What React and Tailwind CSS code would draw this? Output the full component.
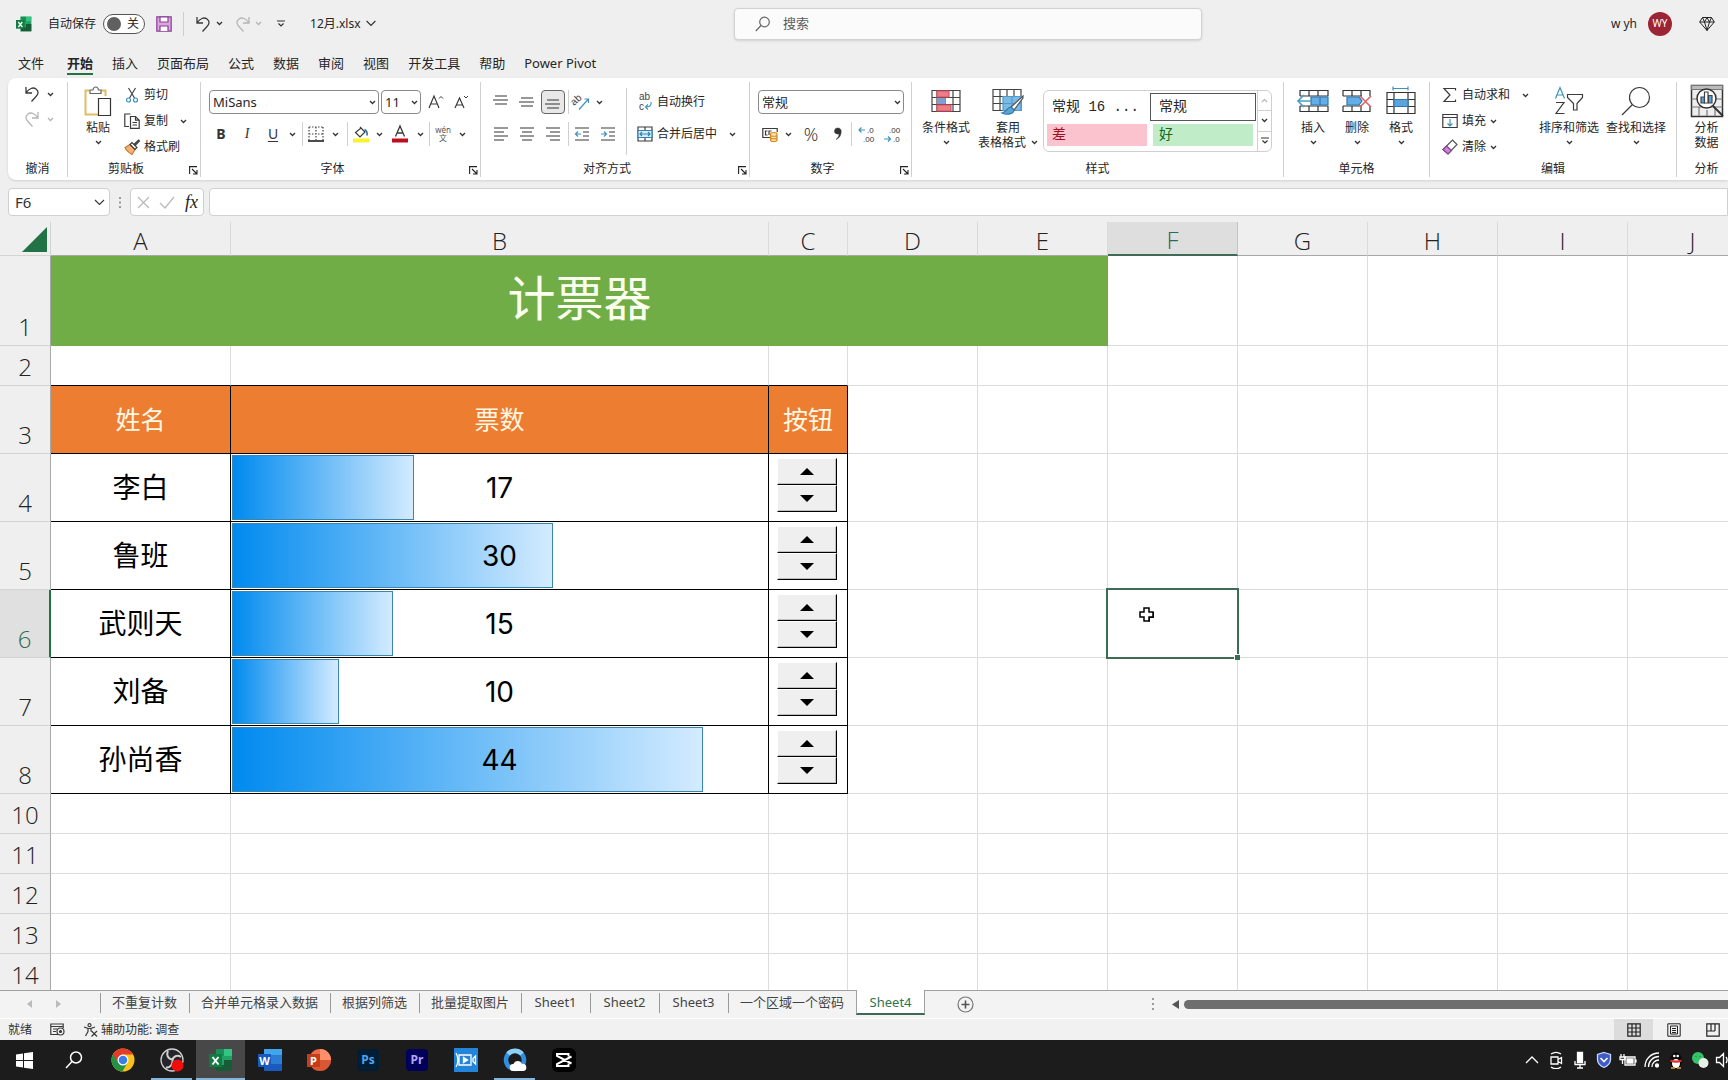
import { useState } from 'react';

const tabs = ['插入', '页面布局', '公式', '数据', '审阅', '视图', '开发工具', '帮助', 'Power Pivot'];

const sheets = ['不重复计数', '合并单元格录入数据', '根据列筛选', '批量提取图片', 'Sheet1', 'Sheet2', 'Sheet3', '一个区域一个密码'];

const columns = ['A', 'B', 'C', 'D', 'E', 'F', 'G', 'H', 'I', 'J'];

const initialVotes = [
  { row: 4, name: '李白', votes: 17 },
  { row: 5, name: '鲁班', votes: 30 },
  { row: 6, name: '武则天', votes: 15 },
  { row: 7, name: '刘备', votes: 10 },
  { row: 8, name: '孙尚香', votes: 44 },
];

const MAX_VOTES = 50;

function Svg({ w = 16, h = 16, children, className = '' }) {
  return (
    <svg
      width={w}
      height={h}
      viewBox={`0 0 ${w} ${h}`}
      fill="none"
      stroke="#3b3b3b"
      strokeWidth="1.2"
      className={`shrink-0 overflow-visible font-['Liberation_Sans',sans-serif] ${className}`}
      aria-hidden="true"
    >
      {children}
    </svg>
  );
}

function Chevron({ color = '#333', className = '' }) {
  return (
    <Svg w={7} h={5} className={className}>
      <path d="M1 1l2.500 2.500L6 1" stroke={color} strokeWidth="1.300" />
    </Svg>
  );
}

function Cell({ label, className = '', children }) {
  return (
    <button aria-label={label} className={`flex h-6 shrink-0 items-center justify-center ${className}`}>
      {children}
    </button>
  );
}

function Divider({ className = '' }) {
  return (
    <span className={`flex h-6 shrink-0 justify-center ${className}`}>
      <span className="h-full w-px bg-[#d0d0d0]" />
    </span>
  );
}

function Launcher() {
  return (
    <button aria-label="更多设置" className="absolute top-[5px] right-[2px] flex">
      <Svg w={9} h={9}>
        <path d="M.6 8V.6H8M3 3l5 5M8 4v4H4" stroke="#222" strokeWidth="1.100" />
      </Svg>
    </button>
  );
}

function Group({ title, launcher, className = '', children }) {
  return (
    <section className={`flex shrink-0 flex-col border-r border-[#d0d0d0] ${className}`}>
      <div className="flex flex-1">{children}</div>
      <div className={`relative text-center text-xs leading-4 ${launcher ? 'pr-4' : ''}`}>
        {title}
        {launcher && <Launcher />}
      </div>
    </section>
  );
}

function Dropdown({ label, value, className = '' }) {
  return (
    <label className={`relative flex h-6 shrink-0 items-center ${className}`}>
      <select
        aria-label={label}
        defaultValue={value}
        className="h-6 w-full appearance-none rounded border border-[#8a8a8a] bg-white px-[3px] text-[13px] leading-5"
      >
        <option>{value}</option>
      </select>
      <Chevron className="pointer-events-none absolute right-[3px]" />
    </label>
  );
}

function BigButton({ icon, lines, inline, className = '' }) {
  return (
    <button className={`flex shrink-0 flex-col items-center text-xs leading-[15px] ${className}`}>
      <span className="flex h-[38px] items-center justify-center">{icon}</span>
      {lines.map((line, i) => (
        <span key={line} className="flex items-center whitespace-nowrap">
          {line}
          {inline && i === lines.length - 1 && <Chevron className="ml-[5px]" />}
        </span>
      ))}
      {!inline && <Chevron className="mt-[5px]" />}
    </button>
  );
}

function SmallButton({ icon, text, arrow, arrowClass = '' }) {
  return (
    <button className="flex h-[26px] items-center text-xs">
      <span className="mr-1 flex w-4 justify-center">{icon}</span>
      {text}
      {arrow && <Chevron className={arrowClass} />}
    </button>
  );
}

/* ---------- ribbon drawings ---------- */

function UndoIcon({ color = '#3b3b3b' }) {
  return (
    <Svg>
      <path d="M2 1v6h6M2 7C5 2.500 9 .8 12 3s2.600 5-.4 8L7.500 15.500" stroke={color} strokeWidth="1.300" />
    </Svg>
  );
}

function RedoIcon({ color = '#b5b5b5' }) {
  return (
    <Svg>
      <path d="M14 1v6H8M14 7C11 2.500 7 .8 4 3S1.400 8 4.400 11L8.500 15.500" stroke={color} strokeWidth="1.300" />
    </Svg>
  );
}

function LinesIcon({ rows }) {
  return (
    <Svg>
      {rows.map(([x1, x2, y]) => (
        <path key={y} d={`M${x1} ${y}H${x2}`} stroke="#333" />
      ))}
    </Svg>
  );
}

function PasteIcon() {
  return (
    <Svg w={28} h={32}>
      <path d="M5.500 5.500H1.500v24h12V29" stroke="#e3bb66" strokeWidth="2" />
      <path d="M17 5.500h4.500V11" stroke="#e3bb66" strokeWidth="2" />
      <path d="M6 8.500V5h3c.5-4 5-4 5.500 0H17v3.500z" fill="#fff" stroke="#666" />
      <path d="M14.500 13.500h12v17h-12z" fill="#fff" stroke="#333" />
    </Svg>
  );
}

function ScissorsIcon() {
  return (
    <Svg>
      <path d="M4.500 1l6 10M11.500 1l-6 10" stroke="#444" />
      <circle cx="4.500" cy="13" r="2" stroke="#3b8fc2" />
      <circle cx="11.500" cy="13" r="2" stroke="#3b8fc2" />
    </Svg>
  );
}

function CopyIcon() {
  return (
    <Svg>
      <path d="M5 13.500H.8V1h5.700" />
      <path d="M6.500 3.500h5l3.700 3.700v8.200H6.500zM11.500 3.500v3.700h3.700M8.500 9.500h4.500M8.500 12h4.500" />
    </Svg>
  );
}

function BrushIcon() {
  return (
    <Svg>
      <path d="M1 8.500l5-3 5 5-3 5C5.500 14 2.500 12 1 8.500z" fill="#f2b27a" stroke="#cf7a2c" />
      <path d="M6 5.500l2-2 5 5-2 2z" fill="#fff" />
      <path d="M10 5.500L14.500 1l1 1L11 6.500" />
    </Svg>
  );
}

function BordersIcon() {
  return (
    <Svg>
      <path d="M1 1h14M1 8h14M1 1v13M8 1v13M15 1v13" stroke="#444" strokeDasharray="1.500 1.500" />
      <path d="M0 15h16" stroke="#111" strokeWidth="1.600" />
    </Svg>
  );
}

function FillIcon() {
  return (
    <Svg w={18} h={18}>
      <path d="M8 2l5 5-5 5-4.500-4.500L9 3" />
      <path d="M12.500 4.500c2 1 3 3 2.500 6" stroke="#2d6ca2" strokeWidth="1.600" />
      <path d="M1 15.500h16" stroke="#f7f32c" strokeWidth="4" />
    </Svg>
  );
}

function FontColorIcon() {
  return (
    <Svg w={18} h={18}>
      <path d="M4.500 11.500L9 1l4.500 10.500M6 8h6" strokeWidth="1.300" />
      <path d="M1 15.500h16" stroke="#c00d1e" strokeWidth="4" />
    </Svg>
  );
}

function CondFormatIcon() {
  return (
    <Svg w={30} h={24}>
      <path d="M1 1.500h28v21H1zM1 8.500h28M1 15.500h28M6 1.500v21M14 1.500v21M22 1.500v21" fill="#fff" stroke="#444" />
      <path d="M6 2h12v6H6zM6 16h14v6H6z" fill="#ef7d89" stroke="#e04f5f" />
      <path d="M6 9h8v6H6z" fill="#7f9fd0" stroke="none" />
    </Svg>
  );
}

function TableFormatIcon() {
  return (
    <Svg w={32} h={28}>
      <path d="M1 2.500h28v21H1zM1 9.500h28M1 16.500h28M8 2.500v21M15 2.500v21M22 2.500v21" fill="#fff" stroke="#444" />
      <path d="M11 9.500h18v14H11z" fill="#7db9e0" stroke="#4d9bd0" />
      <path d="M20 9.500v14M11 16.500h18" stroke="#4d9bd0" />
      <path d="M31 9L19 20l3 3 9-12z" fill="#fff" stroke="#555" />
      <path d="M19 20c-4 0-4 5-9 6 5 2.500 12 1 12-3z" fill="#5aa5d8" stroke="#2f78ad" />
    </Svg>
  );
}

function InsertCellsIcon() {
  return (
    <Svg w={32} h={24}>
      <path d="M3 7V1.500h28V7M12 1.500V7M21 1.500V7M3 7h28M3 17h28M3 17v5.500h28V17M12 17v5.500M21 17v5.500" stroke="#333" />
      <path d="M14 8h17v8H14z" fill="#63aee6" stroke="#2f78ad" />
      <path d="M23 8v8" stroke="#2f78ad" />
      <path d="M14 12H1M7 6l-6 6 6 6" stroke="#4b9ec4" strokeWidth="1.600" />
    </Svg>
  );
}

function DeleteCellsIcon() {
  return (
    <Svg w={30} h={24}>
      <path d="M1 7V1.500h27V7M10 1.500V7M19 1.500V7M1 7h19M1 17h19M1 17v5.500h27V17M10 17v5.500M19 17v5.500" stroke="#333" />
      <path d="M5 8h12l3 4-3 4H5z" fill="#63aee6" stroke="#2f78ad" />
      <path d="M18 7l11 11M29 7L18 18" stroke="#d8656a" strokeWidth="1.600" />
    </Svg>
  );
}

function FormatCellsIcon() {
  return (
    <Svg w={30} h={30}>
      <path d="M7 2.500h15M7 .5v4M22 .5v4" stroke="#3f92b8" />
      <path d="M1 6.500h28v21H1zM1 13.500h28M1 20.500h28M8 6.500v21M22 6.500v21" stroke="#333" />
      <path d="M8 13.500h14v7H8z" fill="#5aa5dd" stroke="#2f78ad" />
    </Svg>
  );
}

function SortIcon() {
  return (
    <Svg w={30} h={30}>
      <path d="M1.500 12.500L6 1.500l4.500 11M3 9h6" stroke="#3f92b8" />
      <path d="M2 16.500h8l-8 11h8.500" />
      <path d="M13.500 8.500h15v3l-5.500 6v6.500h-3.500v-6.500l-6-6z" />
    </Svg>
  );
}

function FindIcon() {
  return (
    <Svg w={30} h={30}>
      <circle cx="18.500" cy="11.500" r="10" />
      <path d="M11.500 18.500L1 29" />
    </Svg>
  );
}

function AnalyzeIcon() {
  return (
    <Svg w={34} h={34}>
      <path d="M1.500 1.500h31v31h-31z" fill="#eee" stroke="#333" strokeWidth="1.500" />
      <path d="M1.500 1.500h31v4h-31z" fill="#bbb" stroke="#777" />
      <path d="M1.500 15h31M1.500 23h31M9 23v9M17 26v6M25 23v9" stroke="#777" />
      <circle cx="16.500" cy="14.500" r="9.500" fill="#fff" stroke="#333" strokeWidth="1.500" />
      <path d="M23 22l10 10" stroke="#333" strokeWidth="2" />
      <path d="M11 13h3.500v6H11zM18.500 11.500H22V19h-3.500z" fill="#5aa5dd" stroke="#444" />
      <path d="M14.500 8H18v11h-3.500z" fill="#fff" stroke="#444" />
    </Svg>
  );
}

function ExcelIcon({ size = 16 }) {
  return (
    <svg width={size} height={size} viewBox="0 0 24 24" aria-hidden="true" className="shrink-0">
      <path d="M7 1h16v22H7z" fill="#21a366" />
      <path d="M7 1h8v7H7z" fill="#1a8f57" />
      <path d="M15 1h8v7h-8z" fill="#33c481" />
      <path d="M15 12h8v11h-8zM7 17h16v6H7z" fill="#185c37" />
      <path d="M0 6h13v13H0z" fill="#107c41" />
      <path d="M3.500 9l6 7.500M9.500 9l-6 7.500" stroke="#fff" strokeWidth="2" />
    </svg>
  );
}

/* ---------- top bars ---------- */

function TitleBar() {
  return (
    <header className="flex h-[47px] items-start text-xs">
      <div className="flex h-[47px] w-[734px] shrink-0 items-center pl-4">
        <ExcelIcon />
        <label htmlFor="autosave" className="ml-4">自动保存</label>
        <span className="relative ml-[7px] flex h-5 w-[42px] items-center rounded-full border border-[#555] bg-white">
          <input id="autosave" type="checkbox" className="absolute inset-0 size-full appearance-none" />
          <span className="ml-[3px] size-[14px] rounded-full bg-[#606060]" />
          <span className="ml-[6px]">关</span>
        </span>
        <button aria-label="保存" className="ml-[11px]">
          <Svg>
            <path d="M.8.8h14.400v14.400H.8z" fill="#d9a6de" stroke="#8b3f96" />
            <path d="M4 1h8v5H4zM4 15v-5h8v5" fill="#fff" stroke="#8b3f96" />
          </Svg>
        </button>
        <Divider className="ml-[11px]" />
        <button aria-label="撤消" className="ml-[11px] flex items-center gap-[5px]">
          <UndoIcon />
          <Chevron />
        </button>
        <button aria-label="恢复" className="ml-3 flex items-center gap-1">
          <RedoIcon />
          <Chevron color="#b5b5b5" />
        </button>
        <button aria-label="自定义" className="ml-[15px]">
          <Svg w={8} h={8}>
            <path d="M0 1h8M1.500 3.500L4 6l2.500-2.500" stroke="#333" />
          </Svg>
        </button>
        <button className="ml-[25px] flex items-center gap-[5px]">
          12月.xlsx
          <Svg w={10} h={7}>
            <path d="M.6 1L5 5.500 9.400 1" stroke="#333" />
          </Svg>
        </button>
      </div>
      <label className="mt-2 flex h-8 w-[468px] shrink-0 items-center rounded border border-[#d2d2d2] bg-[#fbfbfb] shadow-sm">
        <Svg className="ml-5">
          <circle cx="9.500" cy="6" r="4.800" stroke="#666" />
          <path d="M6 9.500L.8 15" stroke="#666" />
        </Svg>
        <input
          type="text"
          aria-label="搜索"
          placeholder="搜索"
          className="ml-3 flex-1 bg-transparent text-[13px] outline-none placeholder:text-[#5c5c5c]"
        />
      </label>
      <div className="flex h-12 flex-1 items-center justify-end pr-[13px]">
        <span>w yh</span>
        <span className="ml-[11px] flex size-6 items-center justify-center rounded-full bg-[#9c2433] text-[10px] text-white">
          WY
        </span>
        <button aria-label="高级功能" className="ml-[27px]">
          <Svg>
            <path d="M3.500 1.500h9L15.300 6 8 14.500.7 6zM.7 6h14.600M3.500 1.500L5.500 6 8 14.500 10.500 6l2-4.500M5.500 6L8 1.500 10.500 6" stroke="#222" strokeWidth="1" />
          </Svg>
        </button>
      </div>
    </header>
  );
}

function RibbonTabs() {
  return (
    <nav className="flex h-[31px] gap-[19px] pt-[6px] pl-[18px] text-[13px] leading-5">
      <button className="mr-1 h-5">文件</button>
      <button className="h-[22px] border-b-2 border-[#217346] font-bold">开始</button>
      {tabs.map((tab) => (
        <button key={tab} className="h-5">{tab}</button>
      ))}
    </nav>
  );
}

function FontGroup() {
  return (
    <Group title="字体" launcher className="w-[280px]">
      <div className="flex flex-col gap-2 pt-2 pl-[7px]">
        <div className="flex items-center pl-px">
          <Dropdown label="字体" value="MiSans" className="w-[170px]" />
          <Dropdown label="字号" value="11" className="ml-[2px] w-10" />
          <Cell label="增大字号" className="ml-[3px] w-[22px]">
            <Svg w={15} h={16}>
              <path d="M1 14L6 2l5 12M3 10h6" />
              <path d="M11 4.500l2-2 2 2" strokeWidth="1" />
            </Svg>
          </Cell>
          <Cell label="减小字号" className="ml-1 w-[22px]">
            <Svg w={15} h={16}>
              <path d="M1 14L5.500 4 10 14M2.500 11H8.500" />
              <path d="M10 2l2 2 2-2" strokeWidth="1" />
            </Svg>
          </Cell>
        </div>
        <div className="flex items-center text-sm text-[#333]">
          <Cell className="w-[26px] font-bold">B</Cell>
          <Cell className="w-[26px] font-['Liberation_Serif',serif] italic">I</Cell>
          <Cell className="w-[26px] underline underline-offset-2">U</Cell>
          <Cell label="下划线样式" className="w-3"><Chevron /></Cell>
          <Divider className="w-[9px]" />
          <Cell label="边框" className="w-[18px]"><BordersIcon /></Cell>
          <Cell label="边框样式" className="w-5"><Chevron /></Cell>
          <Divider className="w-1" />
          <Cell label="填充颜色" className="w-6"><FillIcon /></Cell>
          <Cell label="更多填充颜色" className="w-3"><Chevron /></Cell>
          <Cell label="字体颜色" className="w-[30px]"><FontColorIcon /></Cell>
          <Cell label="更多字体颜色" className="w-[10px]"><Chevron /></Cell>
          <Divider className="w-2" />
          <Cell className="w-5 flex-col text-[8px] leading-2 text-[#555]">
            <span>wén</span>
            <span>文</span>
          </Cell>
          <Cell label="拼音选项" className="w-[18px]"><Chevron /></Cell>
        </div>
      </div>
    </Group>
  );
}

function AlignGroup() {
  return (
    <Group title="对齐方式" launcher className="w-[269px]">
      <div className="my-[6px] flex w-[146px] shrink-0 flex-col gap-2 border-r border-[#d0d0d0] pt-[2px] pl-[7px]">
        <div className="flex">
          <Cell label="顶端对齐" className="w-[26px]">
            <LinesIcon rows={[[2, 14, 2], [0, 15, 6], [2, 14, 10]]} />
          </Cell>
          <Cell label="垂直居中" className="w-[26px]">
            <LinesIcon rows={[[2, 14, 4], [0, 15, 8], [2, 14, 12]]} />
          </Cell>
          <Cell label="底端对齐" className="w-[26px]">
            <span className="flex size-6 items-center justify-center rounded border border-[#666] bg-[#e8e8e8]">
              <LinesIcon rows={[[2, 14, 6], [0, 15, 10], [2, 14, 14]]} />
            </span>
          </Cell>
          <Divider className="w-1" />
          <Cell label="方向" className="w-6">
            <Svg>
              <text x="0" y="12" fontSize="10" fill="#444" stroke="none" transform="rotate(-42 0 12)">ab</text>
              <path d="M5 15.500L14.500 5M10.500 5h4v4" stroke="#3f92b8" />
            </Svg>
          </Cell>
          <Cell label="方向选项" className="w-[10px]"><Chevron /></Cell>
        </div>
        <div className="flex">
          <Cell label="左对齐" className="w-[26px]">
            <LinesIcon rows={[[1, 15, 2], [1, 11, 6], [1, 15, 10], [1, 11, 14]]} />
          </Cell>
          <Cell label="居中" className="w-[26px]">
            <LinesIcon rows={[[1, 15, 2], [3, 13, 6], [1, 15, 10], [3, 13, 14]]} />
          </Cell>
          <Cell label="右对齐" className="w-[26px]">
            <LinesIcon rows={[[1, 15, 2], [5, 15, 6], [1, 15, 10], [5, 15, 14]]} />
          </Cell>
          <Divider className="w-1" />
          <Cell label="减少缩进量" className="w-6">
            <Svg>
              <path d="M1 2h14M9 6h6M9 10h6M1 14h14" />
              <path d="M7 8H1.500M4 5.500L1.500 8 4 10.500" stroke="#3f92b8" />
            </Svg>
          </Cell>
          <Cell label="增加缩进量" className="w-7">
            <Svg>
              <path d="M1 2h14M9 6h6M9 10h6M1 14h14" />
              <path d="M1 8h5.500M4 5.500L6.500 8 4 10.500" stroke="#3f92b8" />
            </Svg>
          </Cell>
        </div>
      </div>
      <div className="flex flex-col gap-[6px] pt-[7px] pl-[10px]">
        <SmallButton
          text="自动换行"
          icon={
            <Svg>
              <text x="2" y="6" fontSize="10" fill="#444" stroke="none">ab</text>
              <text x="2" y="16" fontSize="10" fill="#444" stroke="none">c</text>
              <path d="M14 8c1 4-2 5-5.500 5M11 10.500L8.500 13l2.500 2.500" stroke="#3f92b8" />
            </Svg>
          }
        />
        <SmallButton
          text="合并后居中"
          arrow
          arrowClass="ml-3"
          icon={
            <Svg>
              <path d="M1 1h14v14H1zM8 1v3M8 12v3" />
              <path d="M1 4.500h14v7H1zM3 8h10M5 6L3 8l2 2M11 6l2 2-2 2" fill="#d8edf8" stroke="#2f86b5" />
            </Svg>
          }
        />
      </div>
    </Group>
  );
}

function NumberGroup() {
  return (
    <Group title="数字" launcher className="w-[162px]">
      <div className="flex flex-col gap-2 pt-2 pl-2">
        <Dropdown label="数字格式" value="常规" className="w-[146px]" />
        <div className="flex">
          <Cell label="会计数字格式" className="w-6">
            <Svg>
              <path d="M9 11.500H.8v-9h14.400V6" />
              <path d="M5.500 5H3.500v4h2M7 9V5h2.500" />
              <path d="M8.500 8c0-2 6.500-2 6.500 0v6c0 2-6.500 2-6.500 0zM8.500 9.500c1 1 5.500 1 6.500 0M8.500 12c1 1 5.500 1 6.500 0" fill="#fbe3b0" stroke="#d18b1e" />
            </Svg>
          </Cell>
          <Cell label="会计格式选项" className="w-3"><Chevron /></Cell>
          <Cell className="w-[34px] font-['Open_Sans',sans-serif] text-lg font-light text-[#222]">%</Cell>
          <Cell label="千位分隔样式" className="w-5">
            <Svg w={8} h={14}>
              <path d="M4 1a3 3 0 0 0-1 6c.8.3 2 0 2-.3C5 9 4 11 2 12.500c3-1 5.200-4 5.200-8A3.200 3.200 0 0 0 4 1z" fill="#333" strokeWidth=".5" />
            </Svg>
          </Cell>
          <Divider className="w-[6px]" />
          <Cell label="增加小数位数" className="w-6">
            <Svg>
              <path d="M7 4H1M3.500 1.500L1 4l2.500 2.500" stroke="#3f92b8" />
              <text x="9" y="7" fontSize="8" fill="#333" stroke="none">.0</text>
              <text x="5" y="16" fontSize="8" fill="#333" stroke="none">.00</text>
            </Svg>
          </Cell>
          <Cell label="减少小数位数" className="w-7">
            <Svg>
              <text x="5" y="7" fontSize="8" fill="#333" stroke="none">.00</text>
              <path d="M0 13h6.500M4 10.500L6.500 13 4 15.500" stroke="#3f92b8" />
              <text x="9" y="16" fontSize="8" fill="#333" stroke="none">.0</text>
            </Svg>
          </Cell>
        </div>
      </div>
    </Group>
  );
}

function StylesGroup() {
  return (
    <Group title="样式" className="w-[372px]">
      <BigButton className="w-[68px]" icon={<CondFormatIcon />} lines={['条件格式']} />
      <BigButton className="w-14" icon={<TableFormatIcon />} lines={['套用', '表格格式']} inline />
      <div className="mt-2 ml-[7px] flex h-[62px] w-[229px] overflow-hidden rounded-md border border-[#cfcfcf] text-sm leading-5">
        <div className="grid flex-1 grid-cols-[100px_1fr] content-start gap-x-[3px] py-[2px] pr-px pl-[3px] font-['Liberation_Mono','Noto_Sans_CJK_SC',monospace]">
          <button className="h-7 pl-[5px] text-left whitespace-nowrap">常规 16 ...</button>
          <button className="h-7 border border-[#555] pl-2 text-left">常规</button>
          <button className="mt-[3px] h-[22px] bg-[#fbc3ce] pl-[5px] text-left leading-[18px] text-[#9c1020]">差</button>
          <button className="mx-[3px] mt-[3px] h-[22px] bg-[#c1ecc8] pl-[6px] text-left leading-[18px] text-[#11691a]">好</button>
        </div>
        <div className="flex w-[14px] flex-col border-l border-[#cfcfcf]">
          <button aria-label="上一行" className="flex flex-1 items-center justify-center">
            <Chevron color="#bbb" className="rotate-180" />
          </button>
          <button aria-label="下一行" className="flex flex-1 items-center justify-center border-y border-[#cfcfcf]">
            <Chevron />
          </button>
          <button aria-label="其他样式" className="flex flex-1 items-center justify-center">
            <Svg w={8} h={8}>
              <path d="M0 1h8M1.500 3.500L4 6l2.500-2.500" stroke="#333" />
            </Svg>
          </button>
        </div>
      </div>
    </Group>
  );
}

function Ribbon() {
  return (
    <div className="ml-2 flex h-[102px] shrink-0 overflow-hidden rounded-l-lg bg-white pt-1 pb-[3px] shadow">
      <Group title="撤消" className="w-[60px]">
        <div className="flex flex-col gap-[9px] pt-1 pl-4">
          <button aria-label="撤消" className="flex items-center gap-[7px]">
            <UndoIcon />
            <Chevron />
          </button>
          <button aria-label="恢复" className="flex items-center gap-[7px]">
            <RedoIcon />
            <Chevron color="#b5b5b5" />
          </button>
        </div>
      </Group>
      <Group title="剪贴板" launcher className="w-[133px]">
        <BigButton className="w-[56px] pl-1" icon={<PasteIcon />} lines={['粘贴']} />
        <div className="flex flex-col">
          <SmallButton icon={<ScissorsIcon />} text="剪切" />
          <SmallButton icon={<CopyIcon />} text="复制" arrow arrowClass="ml-3" />
          <SmallButton icon={<BrushIcon />} text="格式刷" />
        </div>
      </Group>
      <FontGroup />
      <AlignGroup />
      <NumberGroup />
      <StylesGroup />
      <Group title="单元格" className="w-[146px]">
        <div className="flex pl-[7px]">
          <BigButton className="w-11" icon={<InsertCellsIcon />} lines={['插入']} />
          <BigButton className="w-11" icon={<DeleteCellsIcon />} lines={['删除']} />
          <BigButton className="w-11" icon={<FormatCellsIcon />} lines={['格式']} />
        </div>
      </Group>
      <Group title="编辑" className="w-[247px]">
        <div className="flex w-[105px] flex-col pl-3">
          <SmallButton
            text="自动求和"
            arrow
            arrowClass="ml-3"
            icon={
              <Svg>
                <path d="M13.500 3.500v-2H2l6 6.500-6 6.500h11.500v-2" />
              </Svg>
            }
          />
          <SmallButton
            text="填充"
            arrow
            arrowClass="ml-1"
            icon={
              <Svg>
                <path d="M.8 1.500h14.400v13H.8zM.8 4.500h14.400" />
                <path d="M8 6v7M5.500 10.500L8 13l2.500-2.500" stroke="#3f92b8" />
              </Svg>
            }
          />
          <SmallButton
            text="清除"
            arrow
            arrowClass="ml-1"
            icon={
              <Svg>
                <path d="M10.500 1l4.500 4.500-9 9.500L1 10.500z" fill="#fff" stroke="#555" />
                <path d="M4.500 7l5 4.500L6 15l-5-4.500z" fill="#c58bd0" stroke="#8b3f96" />
              </Svg>
            }
          />
        </div>
        <BigButton className="w-[68px]" icon={<SortIcon />} lines={['排序和筛选']} />
        <BigButton className="w-[66px]" icon={<FindIcon />} lines={['查找和选择']} />
      </Group>
      <Group title="分析" className="w-[60px]">
        <button className="flex w-full flex-col items-center text-xs leading-[15px]">
          <span className="flex h-[38px] items-center"><AnalyzeIcon /></span>
          <span>分析</span>
          <span>数据</span>
        </button>
      </Group>
    </div>
  );
}

function FormulaBar() {
  return (
    <div className="flex h-[42px] shrink-0 items-start pt-2">
      <label className="relative ml-2 flex h-7 w-[102px] items-center rounded border border-[#d0d0d0] bg-white">
        <input type="text" aria-label="名称框" defaultValue="F6" className="w-full bg-transparent pl-[6px] text-[15px] text-[#333] outline-none" />
        <Svg w={11} h={7} className="absolute right-1">
          <path d="M1 1l4.500 4.500L10 1" />
        </Svg>
      </label>
      <Svg w={4} h={28} className="ml-2">
        <path d="M2 9v11" stroke="#999" strokeWidth="2" strokeDasharray="2 2.500" />
      </Svg>
      <div className="ml-2 flex h-7 w-[74px] items-center rounded border border-[#d0d0d0] bg-white pl-[6px]">
        <button aria-label="取消">
          <Svg w={13} h={13}>
            <path d="M1 1l11 11M12 1L1 12" stroke="#b8b8b8" />
          </Svg>
        </button>
        <button aria-label="输入" className="ml-[9px]">
          <Svg w={16} h={13}>
            <path d="M1 7l5 5L15 1" stroke="#b8b8b8" />
          </Svg>
        </button>
        <button className="ml-[10px] font-['Liberation_Serif',serif] text-lg leading-5 text-[#222] italic">fx</button>
      </div>
      <input type="text" aria-label="编辑栏" className="ml-[5px] h-7 flex-1 rounded-l border border-[#d0d0d0] bg-white px-2 outline-none" />
    </div>
  );
}

/* ---------- worksheet ---------- */

function RowHead({ n, active }) {
  return (
    <th
      scope="row"
      className={
        active
          ? 'border-r-2 border-b border-[#217346] border-b-[#d4d4d4] bg-[#e0e0e0] p-0 align-bottom text-2xl leading-9 font-light text-[#2e6b50]'
          : 'border-r border-b border-r-[#a8a8a8] border-b-[#d4d4d4] bg-[#efefef] p-0 align-bottom text-2xl leading-9 font-light text-[#222]'
      }
    >
      {n}
    </th>
  );
}

function Blanks({ count }) {
  return Array.from({ length: count }, (_, i) => <td key={i} className="border-r border-b border-[#dcdcdc] p-0" />);
}

function Spinner({ name, onUp, onDown }) {
  const face =
    'flex h-[27px] w-[60px] items-center justify-center border border-t-white border-r-black border-b-black border-l-white bg-[#efefef] shadow-[inset_-1px_-1px_#c0c0c0]';
  return (
    <div className="mx-auto mt-1 flex w-[62px] flex-col">
      <button aria-label={`${name} 加一票`} onClick={onUp} className={face}>
        <svg width="14" height="7" viewBox="0 0 14 7"><path d="M7 0l7 7H0z" fill="#000" /></svg>
      </button>
      <button aria-label={`${name} 减一票`} onClick={onDown} className={face}>
        <svg width="14" height="7" viewBox="0 0 14 7"><path d="M0 0h14L7 7z" fill="#000" /></svg>
      </button>
    </div>
  );
}

function SelectedCell() {
  return (
    <td className="relative border-r border-b border-[#dcdcdc] p-0">
      <div className="pointer-events-none absolute -inset-[2px] border-2 border-[#3c6b56]">
        <span className="absolute -right-[3px] -bottom-[3px] size-[6px] border-t border-l border-white bg-[#3c6b56]" />
      </div>
      <svg width="18" height="18" viewBox="0 0 18 18" className="absolute top-4 left-[30px]" aria-hidden="true">
        <path d="M6 2h5v4h4v5h-4v4H6v-4H2V6h4z" fill="#fff" stroke="#000" strokeWidth="1.500" />
        <path d="M11.500 15.500V11.500h4V6" fill="none" stroke="#000" />
      </svg>
    </td>
  );
}

function Worksheet() {
  const [votes, setVotes] = useState(initialVotes);

  const change = (row, delta) => {
    setVotes(
      votes.map((v) => (v.row === row ? { ...v, votes: Math.min(MAX_VOTES, Math.max(0, v.votes + delta)) } : v))
    );
  };

  return (
    <main className="min-h-0 flex-1 overflow-hidden">
      <table className="w-[1758px] table-fixed border-separate border-spacing-0 bg-white text-center font-['Open_Sans','Noto_Sans_CJK_SC',sans-serif]">
        <colgroup>
          <col className="w-[51px]" />
          <col className="w-[180px]" />
          <col className="w-[538px]" />
          <col className="w-[79px]" />
          {columns.slice(3).map((c) => (
            <col key={c} className="w-[130px]" />
          ))}
        </colgroup>
        <thead>
          <tr className="h-[34px] bg-[#efefef]">
            <td className="border-r border-b border-[#d4d4d4] p-0 align-bottom">
              <svg width="25" height="25" viewBox="0 0 25 25" className="mb-[3px] ml-[22px]" aria-hidden="true">
                <path d="M25 0v25H0z" fill="#217346" />
              </svg>
            </td>
            {columns.map((c) => (
              <th
                key={c}
                scope="col"
                className={
                  c === 'F'
                    ? 'border-r border-b-2 border-r-[#c4c4c4] border-b-[#3c6b56] bg-[#dedede] p-0 pt-1 text-2xl leading-7 font-light text-[#2e6b50]'
                    : 'border-r border-b border-r-[#dadada] border-b-[#a8a8a8] p-0 pt-1 text-2xl leading-7 font-light text-[#222]'
                }
              >
                {c}
              </th>
            ))}
          </tr>
        </thead>
        <tbody>
          <tr className="h-[90px]">
            <RowHead n={1} />
            <td colSpan={5} className="bg-[#70ad47] p-0 pb-[6px] text-5xl text-[#fbffee]">计票器</td>
            <Blanks count={5} />
          </tr>
          <tr className="h-10">
            <RowHead n={2} />
            <td className="border-r border-b border-r-[#dcdcdc] border-b-black p-0" />
            <td className="border-r border-b border-r-[#dcdcdc] border-b-black p-0" />
            <td className="border-r border-b border-r-[#dcdcdc] border-b-black p-0" />
            <Blanks count={7} />
          </tr>
          <tr className="h-[68px] text-[25px] leading-10 text-[#fff8e4]">
            <RowHead n={3} />
            <td className="border-r border-b border-black bg-[#ed7d31] p-0 pb-[2px]">姓名</td>
            <td className="border-r border-b border-black bg-[#ed7d31] p-0 pb-[2px]">票数</td>
            <td className="border-r border-b border-black bg-[#ed7d31] p-0 pb-[2px]">按钮</td>
            <Blanks count={7} />
          </tr>
          {votes.map((v) => (
            <tr key={v.row} className="h-[68px] text-[28px] leading-10 text-black">
              <RowHead n={v.row} active={v.row === 6} />
              <td className="border-r border-b border-black p-0 pb-[2px]">{v.name}</td>
              <td className="relative border-r border-b border-black p-0">
                <div className="absolute inset-px">
                  <div
                    className="h-full border border-[#3b86ad] bg-linear-to-r/srgb from-[#008aef] to-[#d3ebff]"
                    style={{ width: `${(v.votes / MAX_VOTES) * 100}%` }}
                  />
                </div>
                <span className="relative font-['Inter',sans-serif]">{v.votes}</span>
              </td>
              <td className="border-r border-b border-black p-0 align-top">
                <Spinner name={v.name} onUp={() => change(v.row, 1)} onDown={() => change(v.row, -1)} />
              </td>
              {v.row === 6 ? (
                <>
                  <Blanks count={2} />
                  <SelectedCell />
                  <Blanks count={4} />
                </>
              ) : (
                <Blanks count={7} />
              )}
            </tr>
          ))}
          {[10, 11, 12, 13, 14].map((n) => (
            <tr key={n} className="h-10">
              <RowHead n={n} />
              <Blanks count={10} />
            </tr>
          ))}
        </tbody>
      </table>
    </main>
  );
}

/* ---------- bottom bars ---------- */

function SheetTabs() {
  return (
    <nav className="flex h-[29px] shrink-0 items-start border-t border-b border-t-[#a0a0a0] border-b-white bg-[#f3f3f3] text-[13px] leading-[18px] text-[#444]">
      <div className="flex h-[26px] w-[100px] items-center gap-6 pl-[27px]">
        <button aria-label="上一个工作表">
          <svg width="5" height="8" viewBox="0 0 5 8"><path d="M5 0v8L0 4z" fill="#bbb" /></svg>
        </button>
        <button aria-label="下一个工作表">
          <svg width="5" height="8" viewBox="0 0 5 8"><path d="M0 0v8l5-4z" fill="#bbb" /></svg>
        </button>
      </div>
      {sheets.map((s) => (
        <button key={s} className="mt-[2px] h-5 min-w-[69px] shrink-0 border-l border-[#999] pr-3 pb-[2px] pl-[11px] text-center">
          {s}
        </button>
      ))}
      <button className="-mt-px h-[25px] w-[69px] border-x border-b-2 border-x-[#a0a0a0] border-b-[#3c6b56] bg-white text-[#2e7550]">
        Sheet4
      </button>
      <button aria-label="新工作表" className="mt-[5px] ml-8">
        <Svg w={17} h={17}>
          <circle cx="8.500" cy="8.500" r="7.500" stroke="#777" />
          <path d="M8.500 4.500v8M4.500 8.500h8" stroke="#555" strokeWidth="1.600" />
        </Svg>
      </button>
      <div className="ml-auto flex h-[26px] w-[577px] items-center">
        <Svg w={4} h={16}>
          <path d="M2 2v12" stroke="#999" strokeWidth="2" strokeDasharray="2 3" />
        </Svg>
        <button aria-label="向左滚动" className="ml-[17px]">
          <svg width="7" height="9" viewBox="0 0 7 9"><path d="M7 0v9L0 4.500z" fill="#555" /></svg>
        </button>
        <div className="ml-[5px] h-[9px] flex-1 rounded-l-full bg-[#6e6e6e]" />
      </div>
    </nav>
  );
}

function StatusBar() {
  return (
    <div className="flex h-[21px] shrink-0 items-center bg-[#f1f1f1] pl-2 text-xs text-[#333]">
      <span>就绪</span>
      <Svg w={15} h={13} className="ml-[18px]">
        <path d="M8 11.500H.8V1h12.400v4M.8 3.500h12.400M3 6h4M3 8.500h3" />
        <circle cx="10.500" cy="8.500" r="3.500" />
        <circle cx="10.500" cy="8.500" r="1" fill="#333" />
      </Svg>
      <button className="ml-[18px] flex items-center gap-[3px]">
        <Svg w={15} h={14}>
          <circle cx="6.500" cy="2.200" r="1.500" />
          <path d="M1 4l4 1.500v3L2.500 13M12 4L8 5.500v3M5 5.500h3M8.500 8l5.500 5.500M14 8l-5.500 5.500" />
        </Svg>
        辅助功能: 调查
      </button>
      <div className="ml-auto flex h-full items-center">
        <button aria-label="普通" className="flex h-full w-[39px] items-center justify-center bg-[#dcdcdc]">
          <Svg w={14} h={14}>
            <path d="M.8.8h12.400v12.400H.8zM.8 5h12.400M.8 9h12.400M5 .8v12.400M9 .8v12.400" stroke="#222" />
          </Svg>
        </button>
        <button aria-label="页面布局" className="flex w-[41px] items-center justify-center">
          <Svg w={14} h={14}>
            <path d="M.8.8h12.400v12.400H.8zM3.500 3h7v8h-7zM5 5.500h4M5 7.500h4M5 9.500h4" stroke="#222" strokeWidth="1" />
          </Svg>
        </button>
        <button aria-label="分页预览" className="flex w-[34px] items-center justify-center pl-1">
          <Svg w={14} h={14}>
            <path d="M.8.8h12.400v12.400H.8zM5 .8V8M9 .8V8M.8 8H9" stroke="#222" />
          </Svg>
        </button>
      </div>
    </div>
  );
}

function OfficeIcon({ letter, dark, mid, light, round }) {
  return (
    <svg width="24" height="24" viewBox="0 0 24 24" aria-hidden="true">
      {round ? (
        <>
          <circle cx="13" cy="12" r="11" fill={mid} />
          <path d="M13 1a11 11 0 0 1 11 11H13z" fill={light} />
          <path d="M2 12a11 11 0 0 0 22 0z" fill={dark} opacity=".45" />
        </>
      ) : (
        <>
          <path d="M6 1h18v22H6z" fill={mid} />
          <path d="M6 1h18v6H6z" fill={light} />
          <path d="M6 16h18v7H6z" fill={dark} />
        </>
      )}
      <path d="M0 6h13v13H0z" fill={dark} />
      <text x="6.500" y="16.500" textAnchor="middle" fontSize="11" fontWeight="bold" fill="#fff">{letter}</text>
    </svg>
  );
}

function AdobeIcon({ letters, bg, fg }) {
  return (
    <svg width="24" height="24" viewBox="0 0 24 24" aria-hidden="true">
      <rect x="1" y="1" width="22" height="22" rx="4" fill={bg} />
      <text x="12" y="16" textAnchor="middle" fontSize="12" fontWeight="bold" fill={fg}>{letters}</text>
    </svg>
  );
}

function Task({ label, running, active, children }) {
  return (
    <button
      aria-label={label}
      className={`relative flex h-full w-[49px] items-center justify-center ${active ? 'bg-[#484848]' : ''}`}
    >
      {children}
      {running && <span className="absolute inset-x-1 bottom-0 h-[2px] bg-[#86b5dc]" />}
      {active && <span className="absolute inset-x-0 bottom-0 h-[2px] bg-[#86b5dc]" />}
    </button>
  );
}

function Tray({ label, children }) {
  return (
    <button aria-label={label} className="flex w-6 shrink-0 justify-center">
      <svg width="18" height="18" viewBox="0 0 18 18" fill="none" stroke="#fff" strokeWidth="1.300">{children}</svg>
    </button>
  );
}

function Taskbar() {
  return (
    <footer className="flex h-10 shrink-0 items-center overflow-hidden bg-[#1c1c1c]">
      <Task label="开始">
        <svg width="17" height="17" viewBox="0 0 17 17"><path d="M0 2.400l7-1V8H0zM8 1.200L17 0v8H8zM0 9h7v6.600l-7-1zM8 9h9v8l-9-1.200z" fill="#fff" /></svg>
      </Task>
      <Task label="搜索">
        <svg width="18" height="18" viewBox="0 0 18 18" fill="none" stroke="#fff" strokeWidth="1.500"><circle cx="11" cy="6.500" r="5.500" /><path d="M7 10.500L1 17" /></svg>
      </Task>
      <Task label="Chrome">
        <svg width="24" height="24" viewBox="0 0 24 24">
          <circle cx="12" cy="12" r="11.500" fill="#fbc116" />
          <path d="M12 12L2 6.300A11.500 11.500 0 0 0 11.300 23.500L16.500 15z" fill="#229342" />
          <path d="M2 6.300A11.500 11.500 0 0 1 22 6.500H11L7 14.500z" fill="#e33b2e" />
          <circle cx="12" cy="12" r="5.500" fill="#fff" />
          <circle cx="12" cy="12" r="4.300" fill="#3b7de9" />
        </svg>
      </Task>
      <Task label="OBS" running>
        <svg width="24" height="24" viewBox="0 0 24 24" fill="none">
          <circle cx="12" cy="12" r="11" fill="#26262a" stroke="#d0d0d0" strokeWidth="1.300" />
          <path d="M8 3c-2 4 0 8 4.500 8.500M21 9c-4-2.500-8-.5-8.500 3M6 19.500c4 .5 7-3 6.500-7.500" stroke="#d0d0d0" strokeWidth="2" />
          <circle cx="17.500" cy="17.500" r="6" fill="#f00d0d" />
        </svg>
      </Task>
      <Task label="Excel" active><ExcelIcon size={24} /></Task>
      <Task label="Word"><OfficeIcon letter="W" dark="#185abd" mid="#2b7cd3" light="#41a5ee" /></Task>
      <Task label="PowerPoint"><OfficeIcon letter="P" dark="#c43e1c" mid="#ed6c47" light="#ff8f6b" round /></Task>
      <Task label="Photoshop"><AdobeIcon letters="Ps" bg="#001e36" fg="#4da3ee" /></Task>
      <Task label="Premiere"><AdobeIcon letters="Pr" bg="#00005b" fg="#b7a3f5" /></Task>
      <Task label="录屏">
        <svg width="24" height="24" viewBox="0 0 24 24" fill="none" stroke="#fff" strokeWidth="1.300">
          <rect width="24" height="24" fill="#2384dc" stroke="none" />
          <path d="M5 7h12v10H5zM2 5c2.500 4 2.500 10 0 14M21.500 8L19 10.500v3l2.500 2.500z" />
          <path d="M9.500 9.500v5l4-2.500z" fill="#fff" />
        </svg>
      </Task>
      <Task label="浏览器" running>
        <svg width="24" height="24" viewBox="0 0 24 24" fill="none">
          <circle cx="12" cy="12" r="9" stroke="#2f8fe0" strokeWidth="4.500" />
          <path d="M5 6a9 9 0 0 1 14 0" stroke="#8fd0f8" strokeWidth="4.500" />
          <path d="M10 23a3.500 3.500 0 0 1 .5-7 4.500 4.500 0 0 1 8.500 0 3.500 3.500 0 0 1 1.500 7z" fill="#fff" />
        </svg>
      </Task>
      <Task label="剪映">
        <svg width="24" height="24" viewBox="0 0 24 24" fill="none" stroke="#fff" strokeWidth="2">
          <rect width="24" height="24" rx="6" fill="#000" stroke="none" />
          <path d="M19.500 8.500L5 16v2h11.500v-2.500M19.500 15.500L5 8V6h11.500v2.500" />
        </svg>
      </Task>
      <div className="-mr-2 ml-auto flex shrink-0">
        <Tray label="显示隐藏的图标"><path d="M3 12l6-6 6 6" /></Tray>
        <Tray label="摄像头"><path d="M4 6h7v7H4zM11 8.500l3.500-2v6l-3.500-2M4 3c3-2 7-2 10 0M4 16c3 2 7 2 10 0" /></Tray>
        <Tray label="麦克风"><path d="M6.500 1.500h5v10h-5z" fill="#fff" /><path d="M4 10v3.500h10V10M9 14v3M6 17h6" /></Tray>
        <Tray label="安全">
          <path d="M9 1.500l6.500 2v5c0 4-3 6.500-6.500 8-3.500-1.500-6.500-4-6.500-8v-5z" fill="#3d5cc8" stroke="#c9d4ff" />
          <path d="M5.500 7L9 10.500 12.500 7" strokeWidth="1.600" />
        </Tray>
        <Tray label="电池"><path d="M6 6h10v8H6zM17 8.500v3" /><path d="M8 8h6v4H8z" fill="#fff" /><path d="M2 3v3M5 3v3M1 6h5v2.500H1zM3.500 9v4" /></Tray>
        <Tray label="网络"><path d="M2 16C2 8 8 2 16 2M5.500 16C5.500 10 10 5.500 16 5.500M9 16c0-4 3-7 7-7" /><circle cx="14" cy="14.500" r="1.500" fill="#fff" /></Tray>
        <Tray label="QQ">
          <ellipse cx="9" cy="9.500" rx="6" ry="8" fill="#0a0a0a" stroke="none" />
          <ellipse cx="9" cy="12.500" rx="4" ry="4.500" fill="#fff" stroke="none" />
          <path d="M3.500 9.500c3.500 1.500 7.500 1.500 11 0" stroke="#e02b2b" strokeWidth="2.200" />
          <circle cx="7.300" cy="5" r="1.300" fill="#fff" stroke="none" />
          <circle cx="10.700" cy="5" r="1.300" fill="#fff" stroke="none" />
          <path d="M4 17h4M10 17h4" stroke="#e8a020" />
        </Tray>
        <Tray label="微信">
          <circle cx="7" cy="7" r="6" fill="#35c268" stroke="none" />
          <circle cx="12.500" cy="12" r="5" fill="#e8efe9" stroke="none" />
          <path d="M5 5.500v.5M9 5.500v.5" stroke="#17502c" />
        </Tray>
        <Tray label="音量"><path d="M1.500 6.500h3l4-4v13l-4-4h-3zM11 6c1.500 2 1.500 4 0 6M13.500 4c2.500 3 2.500 7 0 10" /></Tray>
      </div>
    </footer>
  );
}

export default function App() {
  return (
    <div className="flex h-screen flex-col overflow-hidden bg-[#efefef] font-['Noto_Sans','Noto_Sans_CJK_SC',sans-serif] text-[#262626]">
      <TitleBar />
      <RibbonTabs />
      <Ribbon />
      <FormulaBar />
      <Worksheet />
      <SheetTabs />
      <StatusBar />
      <Taskbar />
    </div>
  );
}
